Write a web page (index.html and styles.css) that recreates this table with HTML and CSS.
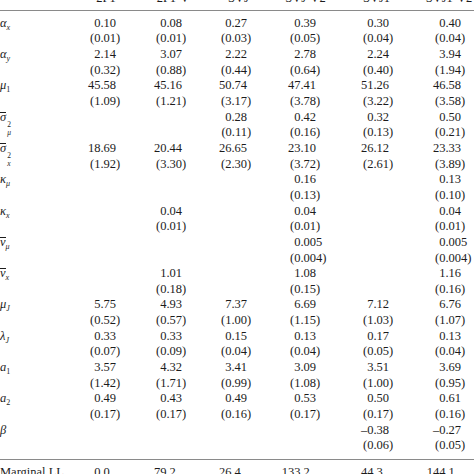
FILE: index.html
```html
<!DOCTYPE html>
<html>
<head>
<meta charset="utf-8">
<link rel="stylesheet" href="styles.css">
</head>
<body>
<div class="page">
<div class="tbl">
<div class="row head"><span></span><span>2F1</span><span>2F1-V</span><span>SVJ</span><span>SVJ-V2</span><span>SVJ1</span><span>SVJ1-V2</span></div>
<div class="rows">
<div class="row"><span class="lab"><i>α</i><sub><i>x</i></sub></span><span>0.10</span><span>0.08</span><span>0.27</span><span>0.39</span><span>0.30</span><span>0.40</span></div>
<div class="row"><span></span><span class="s">(0.01)</span><span class="s">(0.01)</span><span class="s">(0.03)</span><span class="s">(0.05)</span><span class="s">(0.04)</span><span class="s">(0.04)</span></div>
<div class="row"><span class="lab"><i>α</i><sub><i>y</i></sub></span><span>2.14</span><span>3.07</span><span>2.22</span><span>2.78</span><span>2.24</span><span>3.94</span></div>
<div class="row"><span></span><span class="s">(0.32)</span><span class="s">(0.88)</span><span class="s">(0.44)</span><span class="s">(0.64)</span><span class="s">(0.40)</span><span class="s">(1.94)</span></div>
<div class="row"><span class="lab"><i>μ</i><sub>1</sub></span><span>45.58</span><span>45.16</span><span>50.74</span><span>47.41</span><span>51.26</span><span>46.58</span></div>
<div class="row"><span></span><span class="s">(1.09)</span><span class="s">(1.21)</span><span class="s">(3.17)</span><span class="s">(3.78)</span><span class="s">(3.22)</span><span class="s">(3.58)</span></div>
<div class="row"><span class="lab"><i class="bar">σ</i><span class="ss"><span class="sp">2</span><span class="sb"><i>μ</i></span></span></span><span></span><span></span><span>0.28</span><span>0.42</span><span>0.32</span><span>0.50</span></div>
<div class="row"><span></span><span></span><span></span><span class="s">(0.11)</span><span class="s">(0.16)</span><span class="s">(0.13)</span><span class="s">(0.21)</span></div>
<div class="row"><span class="lab"><i class="bar">σ</i><span class="ss"><span class="sp">2</span><span class="sb"><i>x</i></span></span></span><span>18.69</span><span>20.44</span><span>26.65</span><span>23.10</span><span>26.12</span><span>23.33</span></div>
<div class="row"><span></span><span class="s">(1.92)</span><span class="s">(3.30)</span><span class="s">(2.30)</span><span class="s">(3.72)</span><span class="s">(2.61)</span><span class="s">(3.89)</span></div>
<div class="row"><span class="lab"><i>κ</i><sub><i>μ</i></sub></span><span></span><span></span><span></span><span>0.16</span><span></span><span>0.13</span></div>
<div class="row"><span></span><span></span><span></span><span></span><span class="s">(0.13)</span><span></span><span class="s">(0.10)</span></div>
<div class="row"><span class="lab"><i>κ</i><sub><i>x</i></sub></span><span></span><span>0.04</span><span></span><span>0.04</span><span></span><span>0.04</span></div>
<div class="row"><span></span><span></span><span class="s">(0.01)</span><span></span><span class="s">(0.01)</span><span></span><span class="s">(0.01)</span></div>
<div class="row"><span class="lab"><i class="bar">ν</i><sub><i>μ</i></sub></span><span></span><span></span><span></span><span class="t">0.005</span><span></span><span class="t">0.005</span></div>
<div class="row"><span></span><span></span><span></span><span></span><span class="ts">(0.004)</span><span></span><span class="ts">(0.004)</span></div>
<div class="row"><span class="lab"><i class="bar">ν</i><sub><i>x</i></sub></span><span></span><span>1.01</span><span></span><span>1.08</span><span></span><span>1.16</span></div>
<div class="row"><span></span><span></span><span class="s">(0.18)</span><span></span><span class="s">(0.15)</span><span></span><span class="s">(0.16)</span></div>
<div class="row"><span class="lab"><i>μ</i><sub><i>J</i></sub></span><span>5.75</span><span>4.93</span><span>7.37</span><span>6.69</span><span>7.12</span><span>6.76</span></div>
<div class="row"><span></span><span class="s">(0.52)</span><span class="s">(0.57)</span><span class="s">(1.00)</span><span class="s">(1.15)</span><span class="s">(1.03)</span><span class="s">(1.07)</span></div>
<div class="row"><span class="lab"><i>λ</i><sub><i>J</i></sub></span><span>0.33</span><span>0.33</span><span>0.15</span><span>0.13</span><span>0.17</span><span>0.13</span></div>
<div class="row"><span></span><span class="s">(0.07)</span><span class="s">(0.09)</span><span class="s">(0.04)</span><span class="s">(0.04)</span><span class="s">(0.05)</span><span class="s">(0.04)</span></div>
<div class="row"><span class="lab"><i>a</i><sub>1</sub></span><span>3.57</span><span>4.32</span><span>3.41</span><span>3.09</span><span>3.51</span><span>3.69</span></div>
<div class="row"><span></span><span class="s">(1.42)</span><span class="s">(1.71)</span><span class="s">(0.99)</span><span class="s">(1.08)</span><span class="s">(1.00)</span><span class="s">(0.95)</span></div>
<div class="row"><span class="lab"><i>a</i><sub>2</sub></span><span>0.49</span><span>0.43</span><span>0.49</span><span>0.53</span><span>0.50</span><span>0.61</span></div>
<div class="row"><span></span><span class="s">(0.17)</span><span class="s">(0.17)</span><span class="s">(0.16)</span><span class="s">(0.17)</span><span class="s">(0.17)</span><span class="s">(0.16)</span></div>
<div class="row"><span class="lab"><i>β</i></span><span></span><span></span><span></span><span></span><span>–0.38</span><span>–0.27</span></div>
<div class="row"><span></span><span></span><span></span><span></span><span></span><span class="s">(0.06)</span><span class="s">(0.05)</span></div>
</div>
<div class="row foot"><span class="lab">Marginal LL</span><span class="o">0.0</span><span class="o">79.2</span><span class="o">26.4</span><span class="o">133.2</span><span class="o">44.3</span><span class="o">144.1</span></div>
</div>
</div>
</body>
</html>
```

FILE: styles.css
```css
html, body {
  margin: 0;
  padding: 0;
  background: #ffffff;
  overflow: hidden;
}
.page {
  width: 474px;
  height: 474px;
  overflow: hidden;
}
.tbl {
  margin-top: -9px;
  width: 474px;
  font-family: "Liberation Serif", "Times New Roman", serif;
  font-size: 12.5px;
  color: #1c1c1c;
}
.row {
  display: grid;
  grid-template-columns: 60px 68px 66px 65px 69px 73px 72px;
  height: 15.67px;
  line-height: 15.67px;
}
.row > span {
  text-align: right;
  padding-right: 12px;
  white-space: nowrap;
  height: 15.67px;
  overflow: visible;
}
.row > span.s { padding-right: calc(12px - 0.333em); }
.row > span.t { padding-right: calc(12px - 0.5em); }
.row > span.ts { padding-right: calc(12px - 0.833em); }
.row > span.o { padding-right: calc(12px + 0.5em); }
.row > span.lab {
  text-align: left;
  padding-right: 0;
}
.head > span {
  text-align: center;
  padding-left: 24px;
  padding-right: 0;
}
.head {
  border-bottom: 1.5px solid #8a8a8a;
  box-sizing: content-box;
  padding-bottom: 3px;
}
.rows {
  padding-top: 5px;
  padding-bottom: 4.5px;
}
.foot {
  border-top: 1.5px solid #8a8a8a;
  padding-top: 5px;
  box-sizing: content-box;
}
.lab i { font-style: italic; }
.lab sub {
  font-size: 8px;
  vertical-align: -3px;
  line-height: 0;
}
.bar {
  display: inline-block;
  border-top: 1px solid #1c1c1c;
  line-height: 9px;
}
.ss {
  display: inline-flex;
  flex-direction: column;
  vertical-align: -6px;
  font-size: 7.5px;
  line-height: 8px;
  height: 16px;
  margin-left: 1px;
}
.sp, .sb { display: block; }
```
